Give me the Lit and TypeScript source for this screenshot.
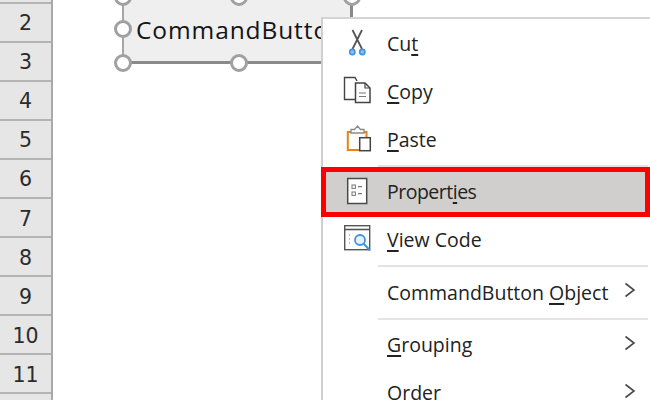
import { LitElement, html, css, svg } from "lit";
import { customElement } from "lit/decorators.js";

const chevron = html`<svg class="chev" width="12" height="16" viewBox="0 0 12 16"><path d="M1.5 1.5 L10 8 L1.5 14.5" fill="none" stroke="#4a4a4a" stroke-width="1.6"/></svg>`;

const icon = (body: unknown) => html`<svg class="ico" width="45" height="40" viewBox="0 0 45 40">${body}</svg>`;

const cut = icon(svg`
  <path d="M22.5 6 L32 25 M32 6 L22.5 25" stroke="#555" stroke-width="1.8" fill="none"/>
  <circle cx="22.3" cy="28" r="2.6" fill="#8cc2ee" stroke="#3f94de" stroke-width="1.6"/>
  <circle cx="32.3" cy="28" r="2.6" fill="#8cc2ee" stroke="#3f94de" stroke-width="1.6"/>`);
const copy = icon(svg`
  <path d="M25 27.5 H14.5 V5.5 H25 L27 9" fill="none" stroke="#444" stroke-width="1.4"/>
  <path d="M25.5 11 H35 L40 16 V30.5 H25.5 Z" fill="#fff" stroke="#444" stroke-width="1.5"/>
  <path d="M35 11 V16 H40" fill="none" stroke="#444" stroke-width="1.2"/>
  <path d="M29 21 H36 M29 24.5 H36" stroke="#777" stroke-width="1.2"/>`);
const paste = icon(svg`
  <path d="M24 12 H17.8 V30 H29" fill="#fff" stroke="#ea8218" stroke-width="2"/>
  <path d="M31 12 H36.5 V17" fill="none" stroke="#ea8218" stroke-width="2"/>
  <path d="M21 13 V9.5 H24.5 L27.5 6 L30.5 9.5 H34 V13 Z" fill="#fff" stroke="#8a8a8a" stroke-width="1.3"/>
  <rect x="29.7" y="17.7" width="10.6" height="13" fill="#fff" stroke="#444" stroke-width="1.5"/>`);
const props = icon(svg`
  <rect x="17.7" y="6.5" width="19" height="25" fill="#fff" stroke="#4a4a4a" stroke-width="1.5"/>
  <rect x="22" y="13" width="3.4" height="3.4" fill="none" stroke="#777" stroke-width="1"/>
  <rect x="22" y="20" width="3.4" height="3.4" fill="none" stroke="#777" stroke-width="1"/>
  <path d="M28 14.7 H32 M28 21.7 H32" stroke="#777" stroke-width="1.3"/>`);
const view = icon(svg`
  <rect x="14.7" y="4.7" width="25" height="24" fill="#fff" stroke="#555" stroke-width="1.4"/>
  <path d="M14.7 8.5 H39.7" stroke="#555" stroke-width="1.6"/>
  <path d="M19 14 H21 M19 18 H21 M19 22 H21" stroke="#888" stroke-width="1.2" stroke-dasharray="1 1"/>
  <circle cx="30" cy="19" r="5" fill="#e6f2fb" stroke="#3f94de" stroke-width="1.8"/>
  <path d="M33.7 22.7 L40 29.5" stroke="#3f94de" stroke-width="2"/>`);

@customElement("app-root")
export class AppRoot extends LitElement {
  static styles = css`
    :host {
      display: block;
      position: relative;
      width: 650px;
      height: 400px;
      overflow: hidden;
      background: #fff;
      font-family: "Open Sans", "Noto Sans", sans-serif;
      color: #262626;
    }
    .headers {
      width: 51px;
      height: 400px;
      overflow: hidden;
      background: #e6e6e6;
      border-right: 2px solid #a9a9a9;
    }
    .strip { height: 3.5px; box-sizing: border-box; border-bottom: 2px solid #b4b4b4; }
    .hrow {
      height: 39.1px;
      box-sizing: border-box;
      border-bottom: 2px solid #b4b4b4;
      padding-top: 2px;
      display: flex;
      align-items: center;
      justify-content: center;
      font-family: "DejaVu Sans", sans-serif;
      font-size: 20.5px;
      color: #2b2b2b;
    }
    .btn {
      position: absolute;
      left: 122px;
      top: -3px;
      width: 231px;
      height: 67px;
      box-sizing: border-box;
      background: #efefef;
      border-left: 2px solid #a6a6a6;
      border-bottom: 3px solid #8a8a8a;
      display: flex;
      align-items: center;
      padding: 0 0 0 12px;
      font-size: 24.5px;
      letter-spacing: 0.9px;
      color: #141414;
      white-space: nowrap;
    }
    .vline {
      position: absolute;
      left: 350px;
      top: 0;
      width: 3px;
      height: 17px;
      background: #8a8a8a;
    }
    .h {
      position: absolute;
      width: 12px;
      height: 12px;
      margin: -9px 0 0 -9px;
      border: 3px solid #a0a0a0;
      border-radius: 50%;
      background: #fff;
    }
    .menu {
      position: absolute;
      left: 321px;
      top: 17px;
      width: 329px;
      padding-top: 3px;
      background: #fff;
      box-shadow: inset 2px 0 0 #cfcfcf, inset 0 2px 0 #d4d4d4;
      font-size: 19.5px;
      color: #222;
    }
    .row {
      height: 48px;
      display: flex;
      align-items: center;
      box-sizing: border-box;
      white-space: nowrap;
    }
    .ico { flex: none; margin-left: 9px; }
    .gut { flex: none; width: 54px; }
    .label { flex: 1; margin-left: 12px; padding-bottom: 2px; }
    .chev { flex: none; margin: 0 14px 4px 0; }
    .sel {
      height: 50px;
      background: #d0cfce;
      box-shadow: inset 0 0 0 5px #fe0000;
    }
    .sel .label { letter-spacing: -0.5px; }
    .short { height: 47px; }
    .tall { height: 50px; }
    .tall .label { padding-bottom: 0; }
    .sep {
      height: 2px;
      margin: 1px 2px 0 57px;
      background: #e3e3e3;
    }
    .sep.last { margin-bottom: 1px; }
    u { text-decoration-skip-ink: none; text-underline-offset: 3px; text-decoration-thickness: 1.5px; }
  `;

  render() {
    const nums = ["2", "3", "4", "5", "6", "7", "8", "9", "10", "11", ""];
    return html`
      <div class="headers">
        <div class="strip"></div>
        ${nums.map((n) => html`<div class="hrow">${n}</div>`)}
      </div>
      <div class="btn">CommandButton</div>
      <div class="vline"></div>
      <div class="h" style="left:123px;top:-3px"></div>
      <div class="h" style="left:239px;top:-3px"></div>
      <div class="h" style="left:352px;top:-3px"></div>
      <div class="h" style="left:123px;top:29px"></div>
      <div class="h" style="left:123px;top:63px"></div>
      <div class="h" style="left:239px;top:63px"></div>
      <div class="menu">
        <div class="row">${cut}<span class="label">Cu<u>t</u></span></div>
        <div class="row">${copy}<span class="label"><u>C</u>opy</span></div>
        <div class="row">${paste}<span class="label"><u>P</u>aste</span></div>
        <div class="sep"></div>
        <div class="row sel">${props}<span class="label">Propert<u>i</u>es</span></div>
        <div class="row short">${view}<span class="label"><u>V</u>iew Code</span></div>
        <div class="sep"></div>
        <div class="row tall"><span class="gut"></span><span class="label">CommandButton <u>O</u>bject</span>${chevron}</div>
        <div class="sep last"></div>
        <div class="row"><span class="gut"></span><span class="label"><u>G</u>rouping</span>${chevron}</div>
        <div class="row"><span class="gut"></span><span class="label">Order</span>${chevron}</div>
      </div>
    `;
  }
}
